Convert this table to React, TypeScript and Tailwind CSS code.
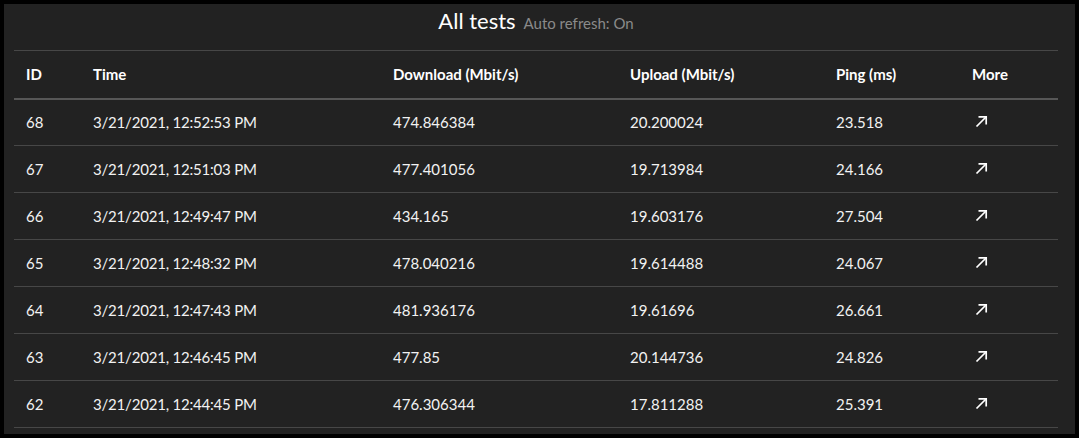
const tests = [
  { id: 68, time: "3/21/2021, 12:52:53 PM", download: "474.846384", upload: "20.200024", ping: "23.518" },
  { id: 67, time: "3/21/2021, 12:51:03 PM", download: "477.401056", upload: "19.713984", ping: "24.166" },
  { id: 66, time: "3/21/2021, 12:49:47 PM", download: "434.165", upload: "19.603176", ping: "27.504" },
  { id: 65, time: "3/21/2021, 12:48:32 PM", download: "478.040216", upload: "19.614488", ping: "24.067" },
  { id: 64, time: "3/21/2021, 12:47:43 PM", download: "481.936176", upload: "19.61696", ping: "26.661" },
  { id: 63, time: "3/21/2021, 12:46:45 PM", download: "477.85", upload: "20.144736", ping: "24.826" },
  { id: 62, time: "3/21/2021, 12:44:45 PM", download: "476.306344", upload: "17.811288", ping: "25.391" },
];

// small "open" arrow
const MoreIcon = () => (
  <svg width="13" height="13" viewBox="0 0 13 13" fill="none" stroke="currentColor" strokeWidth="1.7">
    <path d="M1.5 11.5 11 2" />
    <path d="M3.5 1.8h7.7v7.7" />
  </svg>
);

const App = () => {
  return (
    <div className="w-[1079px] h-[438px] bg-black p-[4px] overflow-hidden" style={{ fontFamily: "Lato, 'Open Sans', sans-serif" }}>
      <div className="h-full bg-[#222222] pl-[10px] pr-[17px]">
        {/* Title */}
        <div className="h-[34px] mb-3 flex items-end justify-center gap-2 pb-[3px]">
          <h1 className="text-[22px] leading-[28px] text-white">All tests</h1>
          <span className="text-[15px] leading-[24px] text-[#8a8a8a]">Auto refresh: On</span>
        </div>

        {/* Table */}
        <table className="w-[1044px] table-fixed border-collapse text-[15px] text-[#f2f2f2]">
          <colgroup>
            <col className="w-[67px]" />
            <col className="w-[300px]" />
            <col className="w-[237px]" />
            <col className="w-[206px]" />
            <col className="w-[136px]" />
            <col className="w-[98px]" />
          </colgroup>
          <thead>
            <tr className="border-t border-[#474747] border-b-2 border-b-[#575757] h-[48px]">
              {["ID", "Time", "Download (Mbit/s)", "Upload (Mbit/s)", "Ping (ms)", "More"].map((h) => (
                <th key={h} className="px-3 text-left font-bold text-white">
                  {h}
                </th>
              ))}
            </tr>
          </thead>
          <tbody>
            {tests.map((t) => (
              <tr key={t.id} className="h-[47px] border-b border-[#474747]">
                <td className="px-3">{t.id}</td>
                <td className="px-3 tracking-[-0.2px]">{t.time}</td>
                <td className="px-3">{t.download}</td>
                <td className="px-3">{t.upload}</td>
                <td className="px-3">{t.ping}</td>
                <td className="px-3 text-white">
                  <span className="inline-flex ml-[3px] pb-[5px]">
                    <MoreIcon />
                  </span>
                </td>
              </tr>
            ))}
          </tbody>
        </table>
      </div>
    </div>
  );
};

export default App;
